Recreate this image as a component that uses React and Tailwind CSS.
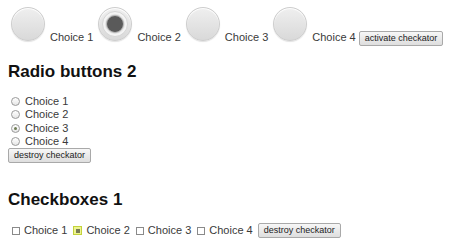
import React from "react";

const choices = ["Choice 1", "Choice 2", "Choice 3", "Choice 4"];

/* ------------------ Big styled radio (checkator) ------------------ */
function BigRadio({ checked }) {
  return (
    <span className="relative w-[34px] h-[34px] shrink-0 rounded-full border border-[#cdcdcd] bg-linear-to-b from-[#efefef] to-[#d9d9d9] shadow-[inset_0_1px_1px_#fff,0_1px_1px_rgba(0,0,0,0.12)]">
      {checked && (
        <span className="absolute inset-[3px] rounded-full bg-[#f4f4f4] border border-[#d6d6d6] flex items-center justify-center">
          <span className="w-[18px] h-[18px] rounded-full bg-[#5a5a5a] border border-[#b8b8b8] shadow-[0_0_0_1px_#e2e2e2]" />
        </span>
      )}
    </span>
  );
}

/* ------------------ Small native-looking radio ------------------ */
function SmallRadio({ checked }) {
  return (
    <span className="w-[9px] h-[9px] rounded-full border border-[#9a9a9a] bg-linear-to-b from-white to-[#e6e6e6] flex items-center justify-center shrink-0">
      {checked && <span className="w-[3px] h-[3px] rounded-full bg-[#6f7d56]" />}
    </span>
  );
}

function SmallCheck({ checked }) {
  if (checked) {
    return (
      <span className="w-[9px] h-[9px] border border-[#c3d23c] bg-[#eef590] flex items-center justify-center shrink-0">
        <span className="w-[4px] h-[4px] bg-[#7a7d55]" />
      </span>
    );
  }
  return <span className="w-[8px] h-[8px] border border-[#8a8a8a] bg-white shrink-0" />;
}

function Btn({ children }) {
  return (
    <button className="block h-[15px] px-[5px] text-[9px] leading-[13px] text-[#222] border border-[#a9a9a9] rounded-[2px] bg-linear-to-b from-[#f7f7f7] to-[#dedede]">
      {children}
    </button>
  );
}

export default function App() {
  return (
    <div className="w-[474px] h-[242px] bg-white overflow-hidden pl-[8px] text-[#3a3a3a] font-['Liberation_Sans',Arial,sans-serif]">
      {/* ------------------ Radio buttons 1 (styled) ------------------ */}
      <div className="flex items-baseline pt-[7px] pl-[3px] text-[11px] leading-[13px]">
        {choices.map((c, i) => (
          <div key={c} className="flex items-baseline gap-[5px] mr-[5px]">
            <BigRadio checked={i === 1} />
            <span>{c}</span>
          </div>
        ))}
        <div className="-ml-[2px]">
          <Btn>activate checkator</Btn>
        </div>
      </div>

      {/* ------------------ Radio buttons 2 ------------------ */}
      <h2 className="mt-[16px] text-[17px] leading-[20px] font-bold text-[#111]">Radio buttons 2</h2>
      <div className="mt-[13px] pl-[3px] text-[11px]">
        {choices.map((c, i) => (
          <div key={c} className="flex items-center gap-[5px] h-[13.3px]">
            <SmallRadio checked={i === 2} />
            <span className="leading-[13px]">{c}</span>
          </div>
        ))}
      </div>
      <Btn>destroy checkator</Btn>

      {/* ------------------ Checkboxes 1 ------------------ */}
      <h2 className="mt-[27px] text-[17px] leading-[20px] font-bold text-[#111]">Checkboxes 1</h2>
      <div className="mt-[13px] pl-[4px] flex items-center text-[11px] leading-[13px]">
        {choices.map((c, i) => (
          <div key={c} className="flex items-center gap-[4px] mr-[6px]">
            <SmallCheck checked={i === 1} />
            <span>{c}</span>
          </div>
        ))}
        <div className="-ml-[1px]">
          <Btn>destroy checkator</Btn>
        </div>
      </div>
    </div>
  );
}
